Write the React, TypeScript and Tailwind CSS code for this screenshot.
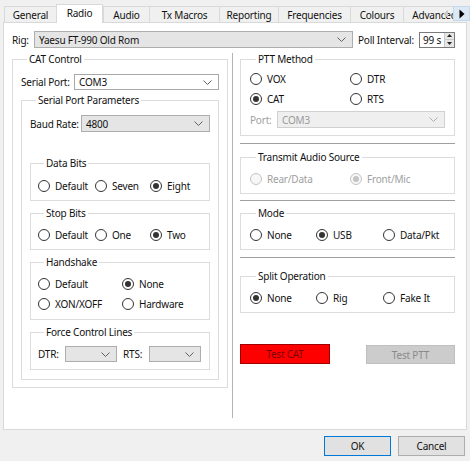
import type { ReactNode } from 'react'

function Chevron({ color = '#606060' }: { color?: string }) {
  return (
    <svg width="9" height="5" viewBox="0 0 9 5" className="shrink-0">
      <path d="M0.5 0.5 L4.5 4.5 L8.5 0.5" fill="none" stroke={color} strokeWidth="1" />
    </svg>
  )
}

function Combo({
  value = '',
  className = '',
  variant = 'gray',
}: {
  value?: string
  className?: string
  variant?: 'gray' | 'white' | 'disabled'
}) {
  const look =
    variant === 'white'
      ? 'bg-white border-[#a8a8a8]'
      : variant === 'disabled'
        ? 'bg-[#efefef] border-[#d0d0d0] text-[#9a9a9a]'
        : 'bg-[#e5e5e5] border-[#adadad]'
  return (
    <div className={`flex items-center justify-between border pl-[4px] pr-[6px] ${look} ${className}`}>
      <span className="whitespace-nowrap">{value}</span>
      <Chevron color={variant === 'disabled' ? '#b0b0b0' : '#606060'} />
    </div>
  )
}

function Radio({
  label,
  checked = false,
  disabled = false,
  className = '',
}: {
  label: string
  checked?: boolean
  disabled?: boolean
  className?: string
}) {
  return (
    <div className={`flex items-center gap-[5px] h-[14px] ${className}`}>
      <span
        className={`w-[12px] h-[12px] rounded-full border flex items-center justify-center shrink-0 ${
          disabled ? 'border-[#c4c4c4] bg-[#f7f7f7]' : 'border-[#333333] bg-white'
        }`}
      >
        {checked && (
          <span className={`w-[6px] h-[6px] rounded-full ${disabled ? 'bg-[#c4c4c4]' : 'bg-[#333333]'}`} />
        )}
      </span>
      <span className={`whitespace-nowrap ${disabled ? 'text-[#a0a0a0]' : ''}`}>{label}</span>
    </div>
  )
}

function Group({ title, className = '', children }: { title: string; className?: string; children: ReactNode }) {
  return (
    <fieldset className={`border border-[#dcdcdc] ${className}`}>
      <legend className="ml-[6px] px-[2px] leading-[14px] whitespace-nowrap">{title}</legend>
      {children}
    </fieldset>
  )
}

const tabs = [
  { name: 'General', w: 'w-[52px]' },
  { name: 'Radio', w: 'w-[47px]', active: true },
  { name: 'Audio', w: 'w-[46px]' },
  { name: 'Tx Macros', w: 'w-[70px]' },
  { name: 'Reporting', w: 'w-[59px]' },
  { name: 'Frequencies', w: 'w-[72px]' },
  { name: 'Colours', w: 'w-[53px]' },
  { name: 'Advanced', w: 'w-[62px]' },
]

function TabBar() {
  return (
    <div className="relative z-10 h-[22px] flex items-end pl-[4px]">
      {tabs.map((t) =>
        t.active ? (
          <div
            key={t.name}
            className={`${t.w} h-[19px] -mb-[1px] bg-white border-x border-t border-[#d9d9d9] flex items-center justify-center pb-[2px]`}
          >
            {t.name}
          </div>
        ) : (
          <div
            key={t.name}
            className={`${t.w} h-[16px] bg-[#f0f0f0] border-l border-t border-[#d9d9d9] flex items-center justify-center whitespace-nowrap overflow-hidden`}
          >
            {t.name}
          </div>
        ),
      )}
      {/* scroll arrows over the clipped last tab */}
      <div className="absolute right-0 top-[6px] flex items-center">
        <svg width="8" height="10" viewBox="0 0 8 10" className="mr-[3px]">
          <path d="M6 1 L1 5 L6 9 Z" fill="#c8c8c8" />
        </svg>
        <div className="w-[17px] h-[15px] bg-[#dce8f4] border border-[#c5d9ee] flex items-center justify-center">
          <svg width="6" height="10" viewBox="0 0 6 10">
            <path d="M0.5 0.5 L5.5 5 L0.5 9.5 Z" fill="#000" />
          </svg>
        </div>
      </div>
    </div>
  )
}

function SpinBox() {
  return (
    <div className="w-[36px] h-[16px] border border-[#7a7a7a] bg-white flex items-center">
      <span className="pl-[3px] flex-1 whitespace-nowrap">99 s</span>
      <div className="w-[10px] h-full border-l border-[#c8c8c8] flex flex-col">
        <div className="flex-1 flex items-center justify-center bg-[#e6e6e6] border-b border-[#c8c8c8]">
          <svg width="5" height="3" viewBox="0 0 5 3">
            <path d="M0 3 L2.5 0 L5 3 Z" fill="#222" />
          </svg>
        </div>
        <div className="flex-1 flex items-center justify-center bg-[#e6e6e6]">
          <svg width="5" height="3" viewBox="0 0 5 3">
            <path d="M0 0 L2.5 3 L5 0 Z" fill="#222" />
          </svg>
        </div>
      </div>
    </div>
  )
}

function CatControl() {
  return (
    <Group title="CAT Control" className="w-[216px] h-[336px] pl-[8px] pt-[8px]">
      <div className="flex items-center h-[16px]">
        <span className="w-[53px] whitespace-nowrap">Serial Port:</span>
        <Combo value="COM3" variant="white" className="w-[145px] h-[16px]" />
      </div>
      <Group title="Serial Port Parameters" className="mt-[3px] w-[198px] h-[287px] pl-[8px]">
        <div className="mt-[8px] flex items-center h-[17px]">
          <span className="w-[51px] whitespace-nowrap">Baud Rate:</span>
          <Combo value="4800" className="w-[129px] h-[17px]" />
        </div>
        <Group title="Data Bits" className="mt-[24px] w-[180px] h-[45px] pl-[7px]">
          <div className="mt-[9px] flex">
            <Radio label="Default" className="w-[57px]" />
            <Radio label="Seven" className="w-[55px]" />
            <Radio label="Eight" checked />
          </div>
        </Group>
        <Group title="Stop Bits" className="mt-[5px] w-[180px] h-[44px] pl-[7px]">
          <div className="mt-[8px] flex">
            <Radio label="Default" className="w-[57px]" />
            <Radio label="One" className="w-[55px]" />
            <Radio label="Two" checked />
          </div>
        </Group>
        <Group title="Handshake" className="mt-[5px] w-[180px] h-[65px] pl-[7px]">
          <div className="mt-[8px] flex">
            <Radio label="Default" className="w-[84px]" />
            <Radio label="None" checked />
          </div>
          <div className="mt-[6px] flex">
            <Radio label="XON/XOFF" className="w-[84px]" />
            <Radio label="Hardware" />
          </div>
        </Group>
        <Group title="Force Control Lines" className="mt-[5px] w-[180px] h-[45px] pl-[7px]">
          <div className="mt-[7px] flex items-center h-[16px]">
            <span className="w-[27px]">DTR:</span>
            <Combo className="w-[52px] h-[16px]" />
            <span className="ml-[6px] w-[26px]">RTS:</span>
            <Combo className="w-[52px] h-[16px]" />
          </div>
        </Group>
      </Group>
    </Group>
  )
}

function Separator({ className = '' }: { className?: string }) {
  return <div className={`h-[1px] w-full bg-[#a0a0a0] ${className}`} />
}

function RightColumn() {
  return (
    <div className="w-[215px] flex flex-col">
      <Group title="PTT Method" className="h-[84px] pl-[9px]">
        <div className="mt-[6px] flex">
          <Radio label="VOX" className="w-[100px]" />
          <Radio label="DTR" />
        </div>
        <div className="mt-[6px] flex">
          <Radio label="CAT" checked className="w-[100px]" />
          <Radio label="RTS" />
        </div>
        <div className="mt-[5px] flex items-center h-[17px]">
          <span className="w-[27px] text-[#a0a0a0]">Port:</span>
          <Combo value="COM3" variant="disabled" className="w-[168px] h-[17px]" />
        </div>
      </Group>
      <Separator className="mt-[7px]" />
      <Group title="Transmit Audio Source" className="mt-[6px] h-[44px] pl-[9px]">
        <div className="mt-[8px] flex">
          <Radio label="Rear/Data" disabled className="w-[100px]" />
          <Radio label="Front/Mic" disabled checked />
        </div>
      </Group>
      <Separator className="mt-[6px]" />
      <Group title="Mode" className="mt-[5px] h-[44px] pl-[9px]">
        <div className="mt-[8px] flex">
          <Radio label="None" className="w-[66px]" />
          <Radio label="USB" checked className="w-[67px]" />
          <Radio label="Data/Pkt" />
        </div>
      </Group>
      <Separator className="mt-[7px]" />
      <Group title="Split Operation" className="mt-[11px] h-[44px] pl-[9px]">
        <div className="mt-[8px] flex">
          <Radio label="None" checked className="w-[66px]" />
          <Radio label="Rig" className="w-[67px]" />
          <Radio label="Fake It" />
        </div>
      </Group>
      <div className="mt-[31px] flex justify-between items-start">
        <button className="w-[90px] h-[20px] bg-[#ff0000] border border-[#a00000] text-[#7a0000]">Test CAT</button>
        <button className="w-[89px] h-[19px] mt-[1px] bg-[#cccccc] border border-[#bfbfbf] text-[#8a8a8a]">
          Test PTT
        </button>
      </div>
    </div>
  )
}

export default function App() {
  return (
    <div className="w-[470px] h-[461px] bg-[#f0f0f0] text-[#111] text-[10px] leading-[14px] tracking-[-0.2px] font-['Noto_Sans','DejaVu_Sans',sans-serif] flex flex-col overflow-hidden">
      <TabBar />
      <div className="mx-[3px] h-[408px] border border-[#d9d9d9] bg-white flex flex-col">
        {/* rig selection */}
        <div className="mt-[8px] pl-[8px] flex items-center h-[17px]">
          <span className="w-[22px]">Rig:</span>
          <Combo value="Yaesu FT-990 Old Rom" className="w-[319px] h-[17px]" />
          <span className="ml-[5px] w-[61px] whitespace-nowrap">Poll Interval:</span>
          <SpinBox />
        </div>

        <div className="mt-[4px] pl-[8px] flex items-start">
          <CatControl />
          <div className="ml-[4px] mt-[1px] w-[1px] h-[365px] bg-[#b4b4b4]" />
          <div className="ml-[7px]">
            <RightColumn />
          </div>
        </div>
      </div>

      <div className="mt-[6px] pr-[5px] flex justify-end gap-[7px]">
        <button className="w-[67px] h-[20px] bg-[#e1e1e1] border border-[#0078d7]">OK</button>
        <button className="w-[67px] h-[20px] bg-[#e1e1e1] border border-[#adadad]">Cancel</button>
      </div>
    </div>
  )
}
